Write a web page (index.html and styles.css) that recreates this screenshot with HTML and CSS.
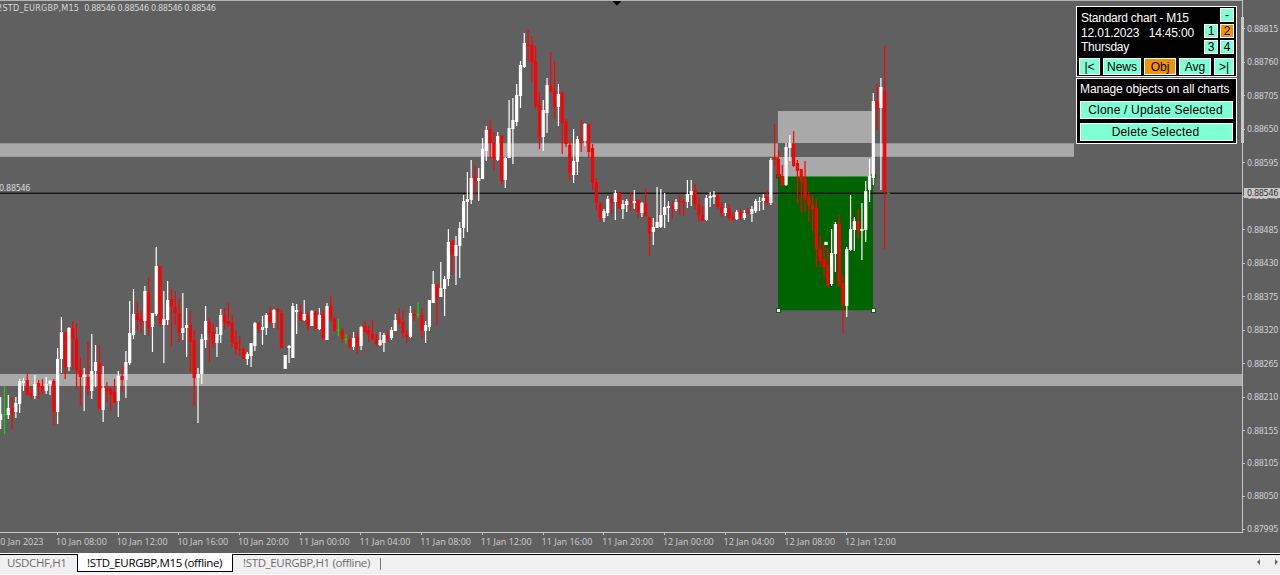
FILE: index.html
```html
<!DOCTYPE html>
<html lang="en">
  <head>
    <meta charset="UTF-8" />
    <meta name="viewport" content="width=device-width, initial-scale=1.0" />
    <title>!STD_EURGBP,M15</title>
    <link rel="stylesheet" href="styles.css" />
  </head>

  <body>
    <div id="terminal">
      <div id="workspace">
        <div id="chart">
          <svg id="plot" width="1242" height="532" viewBox="0 0 1242 532">
            <rect class="zone" x="0" y="143.3" width="778" height="13.5" />
            <rect class="zone" x="873" y="143.3" width="201" height="13.5" />
            <rect class="zone" x="0" y="374" width="1242" height="12" />
            <rect class="zone" x="778" y="111" width="95" height="32" />
            <rect class="zone" x="778" y="157" width="95" height="20" />
            <rect class="zone-green" x="778" y="176.5" width="95" height="133.8" />
            <rect class="zone-green" x="776" y="174" width="5" height="4.5" />
            <rect class="zone-green" x="871" y="174" width="5" height="4.5" />
            <rect class="price-line" x="0" y="192.6" width="1242" height="1.3" />
            <g id="candles"></g>
            <g class="handle">
              <rect x="776.5" y="308.5" width="4" height="4" />
              <rect x="871.5" y="308.5" width="4" height="4" />
            </g>
            <rect x="824.3" y="241.8" width="3.4" height="3.2" fill="#fff" />
            <rect x="887" y="192.5" width="3" height="1.4" fill="#1fae1f" />
            <path d="M612.5 1 H621.5 L617 5.8 Z" fill="#000" />
          </svg>
          <p class="title">
            <span>!STD_EURGBP,M15</span>
            <span class="prices">0.88546 0.88546 0.88546 0.88546</span>
          </p>
          <p class="line-label">0.88546</p>

          <div id="panels">
            <div class="panel panel-main">
              <div class="info">
                <p>Standard chart - M15</p>
                <p class="date">12.01.2023 &nbsp; 14:45:00</p>
                <p>Thursday</p>
              </div>
              <div class="numbers">
                <button class="btn minus">-</button>
                <button class="btn">1</button>
                <button class="btn active">2</button>
                <button class="btn">3</button>
                <button class="btn">4</button>
              </div>
              <div class="tools">
                <button class="btn">|&lt;</button>
                <button class="btn">News</button>
                <button class="btn active">Obj</button>
                <button class="btn">Avg</button>
                <button class="btn">&gt;|</button>
              </div>
            </div>
            <div class="panel panel-objects">
              <p>Manage objects on all charts</p>
              <button class="btn">Clone / Update Selected</button>
              <button class="btn">Delete Selected</button>
            </div>
          </div>
        </div>

        <div id="price-axis">
          <span>0.88815</span>
          <span>0.88760</span>
          <span>0.88705</span>
          <span>0.88650</span>
          <span>0.88595</span>
          <span>0.88540</span>
          <span>0.88485</span>
          <span>0.88430</span>
          <span>0.88375</span>
          <span>0.88320</span>
          <span>0.88265</span>
          <span>0.88210</span>
          <span>0.88155</span>
          <span>0.88105</span>
          <span>0.88050</span>
          <span>0.87995</span>
          <b class="price-now">0.88546</b>
          <i class="scale-bar"></i>
        </div>
      </div>

      <div id="time-axis">
        <span>10 Jan 2023</span>
        <span>10 Jan 08:00</span>
        <span>10 Jan 12:00</span>
        <span>10 Jan 16:00</span>
        <span>10 Jan 20:00</span>
        <span>11 Jan 00:00</span>
        <span>11 Jan 04:00</span>
        <span>11 Jan 08:00</span>
        <span>11 Jan 12:00</span>
        <span>11 Jan 16:00</span>
        <span>11 Jan 20:00</span>
        <span>12 Jan 00:00</span>
        <span>12 Jan 04:00</span>
        <span>12 Jan 08:00</span>
        <span>12 Jan 12:00</span>
      </div>

      <div id="tabs">
        <div class="tab tab-first">USDCHF,H1</div>
        <div class="tab tab-active">!STD_EURGBP,M15 (offline)</div>
        <div class="tab tab-last">!STD_EURGBP,H1 (offline)</div>
        <svg class="arrows" width="24" height="10" viewBox="0 0 24 10">
          <path d="M4 2 V8 L1 5 Z M19 2 V8 L22 5 Z" />
        </svg>
      </div>
    </div>
    <script src="script.js"></script>
  </body>
</html>
```

FILE: styles.css
```css
body {
  margin: 0;
  overflow: hidden;
  background-color: #f0f0f0;
  font-family: "Open Sans", "Noto Sans", sans-serif;
}

p {
  margin: 0;
}

#terminal {
  display: flex;
  flex-direction: column;
  width: 1280px;
  height: 575px;
  background-color: #606060;
}

#workspace {
  display: flex;
  height: 532px;
}

/* chart */

#chart {
  position: relative;
  width: 1242px;
  box-sizing: border-box;
  border-top: 1px solid #b4b4b4;
}

#plot {
  display: block;
  margin-top: -1px;
}

.zone {
  fill: #a9a9a9;
}

.zone-green {
  fill: #006400;
}

.price-line {
  fill: #111;
}

.handle rect {
  fill: #fff;
  stroke: #006400;
  stroke-width: 1;
}

.up {
  fill: #fff;
}

.down {
  fill: #f00;
}

.flat {
  fill: #0d0;
}

.title,
.line-label {
  position: absolute;
  left: -1px;
  font-family: "DejaVu Sans Condensed", "DejaVu Sans", sans-serif;
  font-size: 9px;
  line-height: 12px;
  color: #d8d8d8;
  white-space: nowrap;
}

.title {
  display: flex;
  gap: 5px;
  top: 1px;
  letter-spacing: 0.22px;
}

.prices,
.line-label {
  letter-spacing: -0.33px;
}

.line-label {
  top: 181px;
}

/* control panels */

#panels {
  position: absolute;
  top: 5px;
  left: 1076px;
  width: 161px;
  font-family: "Liberation Sans", Arial, sans-serif;
  color: #fff;
}

.panel {
  box-sizing: border-box;
  border: 1px solid #fff;
  background-color: #000;
}

.panel-main {
  display: grid;
  grid-template-columns: 1fr 34px;
  grid-template-rows: 48px 1fr;
  height: 71px;
}

.info {
  padding: 4px 0 0 4px;
  font-size: 12px;
  line-height: 14.5px;
  letter-spacing: -0.25px;
  white-space: nowrap;
}

.info .date {
  letter-spacing: -0.18px;
}

.numbers {
  display: grid;
  grid-template-columns: 14px 14px;
  grid-template-rows: 14px 14px 14px;
  gap: 2px;
  padding: 1px 0 0 2px;
}

.btn {
  padding: 0;
  border: 1px solid #fff;
  background-color: #7fffd4;
  font-family: "Liberation Sans", Arial, sans-serif;
  font-size: 12px;
  line-height: 12px;
  color: #000;
}

.btn.active {
  background-color: #f29400;
}

.minus {
  grid-column: 2;
}

.tools {
  grid-column: 1 / 3;
  display: grid;
  grid-template-columns: 21px 38px 32px 32px 20px;
  grid-template-rows: 17px;
  justify-content: space-between;
  padding: 3px 2px 0 2px;
}

.panel-objects {
  display: flex;
  flex-direction: column;
  gap: 4px;
  height: 66px;
  margin-top: 1px;
  padding: 3px 3px 0 3px;
  font-size: 12px;
  line-height: 15px;
}

.panel-objects p {
  letter-spacing: -0.12px;
  white-space: nowrap;
}

.panel-objects .btn {
  height: 18px;
  padding-right: 2px;
  letter-spacing: 0.2px;
}

/* axes */

#price-axis {
  position: relative;
  display: flex;
  flex-direction: column;
  width: 38px;
  height: 532px;
  box-sizing: border-box;
  padding-top: 12px;
  border-left: 1px solid #c8c8c8;
  font-family: "DejaVu Sans Condensed", "DejaVu Sans", sans-serif;
  font-size: 9px;
  letter-spacing: -0.35px;
  color: #d0d0d0;
}

#price-axis span {
  display: flex;
  align-items: center;
  flex: none;
  height: 33.5px;
}

#price-axis span:nth-child(14) {
  margin-top: -1px;
}

#price-axis span:nth-child(n + 14) {
  height: 33px;
}

#price-axis span::before {
  content: "";
  width: 2px;
  height: 1px;
  margin-right: 2px;
  background-color: #c8c8c8;
}

.price-now {
  position: absolute;
  top: 188px;
  left: 1px;
  width: 36px;
  height: 10px;
  padding-left: 3px;
  box-sizing: border-box;
  background-color: #c8c8c8;
  font-weight: normal;
  line-height: 11px;
  color: #333;
}

.scale-bar {
  position: absolute;
  top: 17px;
  left: -2px;
  width: 3px;
  height: 126px;
  background-color: #c8c8c8;
}

#time-axis {
  display: flex;
  height: 21px;
  width: 1243px;
  box-sizing: border-box;
  border-top: 1px solid #c8c8c8;
  font-size: 9px;
  line-height: 13px;
  color: #d0d0d0;
  white-space: nowrap;
}

#time-axis span {
  flex: none;
  width: 60.7px;
}

#time-axis span::before {
  content: "";
  display: block;
  width: 1px;
  height: 2px;
  margin-left: 1px;
  background-color: #c8c8c8;
}

#time-axis span:first-child {
  width: 61px;
  margin-left: -5px;
}

/* tabs */

#tabs {
  display: flex;
  height: 22px;
  box-sizing: border-box;
  border-top: 1px solid #fff;
  border-bottom: 1px solid #fff;
  background-color: #f0f0f0;
  box-shadow: inset 0 1px #000;
  font-size: 11.5px;
  line-height: 18px;
  letter-spacing: -0.35px;
  color: #6d6d6d;
}

.tab {
  box-sizing: border-box;
  height: 18px;
  white-space: nowrap;
}

.tab-first {
  width: 77px;
  padding-left: 7px;
}

.tab-active {
  width: 156px;
  padding-left: 9px;
  border: 1px solid #000;
  border-top: 0;
  background-color: #fff;
  color: #000;
}

.tab-last {
  width: 148px;
  padding-left: 10px;
  background: linear-gradient(#777, #777) right 4px / 1px 12px no-repeat;
}

.arrows {
  margin: 3px 0 0 auto;
  fill: #666;
}
```

FILE: script.js
```js
// high, body top, body bottom, low, color (w = up, r = down, g = flat)
const candles = `
397 414 420 429 w,386 414 415 434 g,395 408 415 419 w,397 408 413 430 r,397 403 412 418 w,379 381 404 413 w
378 381 383 391 w,373 380 395 395 r,386 393 396 399 r,375 384 396 399 w,380 383 387 399 r,379 386 391 394 r
377 384 391 394 w,380 381 384 395 w,379 381 412 425 r,348 359 412 424 w,317 332 359 373 w,332 332 367 379 r
327 328 367 371 w,321 328 339 369 r,323 339 370 389 r,358 370 377 406 r,368 375 377 411 w,342 377 389 395 r
334 371 391 399 w,345 362 371 387 w,345 362 410 410 r,366 388 410 422 w,382 388 391 402 r,387 389 395 411 r
379 392 403 403 r,371 376 401 417 w,366 376 380 392 r,351 362 380 398 w,301 333 363 365 w,289 314 335 339 w
301 313 320 330 r,311 319 322 333 r,286 291 321 335 w,277 292 328 336 r,313 313 327 352 w,247 266 314 316 w
266 266 323 327 r,291 319 325 363 w,281 300 320 325 w,289 299 307 346 r,291 307 313 325 r,299 313 333 342 r
293 328 333 340 w,308 325 328 357 w,311 325 342 372 r,330 340 378 406 r,368 374 378 423 w,334 339 374 384 w
306 321 340 348 w,318 322 333 363 r,323 332 343 348 r,327 334 343 357 w,309 315 335 343 w,308 315 322 329 r
303 321 324 327 r,315 323 343 347 r,331 342 349 355 r,336 349 350 356 r,347 349 359 359 r,352 354 359 365 w
343 343 356 367 w,322 323 346 351 w,322 323 329 333 r,316 327 330 345 w,313 315 328 335 w,307 313 322 326 r
309 310 323 328 w,308 309 312 329 r,310 313 348 348 r,355 355 369 369 w,345 346 348 363 w,303 306 358 358 w
304 310 312 334 w,304 312 321 321 r,300 314 320 321 w,311 315 326 331 r,310 311 326 326 w,311 311 329 329 r
308 315 329 330 w,310 314 338 340 r,303 306 340 340 w,296 306 319 321 r,317 319 331 332 r,319 330 331 336 g
328 330 339 343 r,334 339 340 344 g,334 339 347 349 r,332 338 347 350 w,332 337 346 354 r,326 327 346 350 w
321 326 332 333 r,325 330 335 342 r,320 334 339 340 r,334 339 344 346 r,332 340 345 346 w,333 335 343 352 w
330 335 338 342 r,327 330 338 340 w,314 320 331 331 w,308 319 323 325 r,311 322 333 338 r,330 334 337 343 r
306 313 337 338 w,309 314 316 321 r,302 314 315 318 g,308 315 331 338 r,321 325 331 343 w,300 300 327 331 w
271 284 303 303 w,284 284 298 325 r,262 288 297 297 w,276 279 289 316 w,229 242 279 286 w,240 241 255 275 r
236 245 256 285 w,222 228 246 278 w,195 201 228 238 w,172 199 202 232 w,160 178 200 204 w,165 177 181 195 r
168 178 181 201 w,138 149 179 179 w,126 130 151 161 w,120 129 143 158 r,132 143 159 171 r,132 136 160 161 w
135 136 181 184 r,157 158 180 188 w,100 128 158 158 w,98 120 129 164 w,84 95 122 126 w,61 65 96 108 w
33 43 67 68 w,30 44 46 62 r,36 45 62 82 r,46 61 106 109 r,92 105 137 149 r,100 110 137 151 w
78 85 113 133 w,52 86 91 93 r,61 91 107 119 r,84 94 107 126 w,91 93 123 154 r,119 122 144 147 r
140 145 173 181 r,129 161 175 183 w,136 139 162 175 w,120 139 141 152 r,123 124 141 146 w,124 124 152 158 r
144 148 183 190 r,178 182 203 211 r,202 204 218 222 r,209 211 218 222 w,196 199 213 216 w,196 199 203 214 r
190 193 202 220 w,192 193 209 209 r,200 204 209 219 w,199 201 205 212 w,192 201 203 211 r,190 201 203 209 w
199 200 212 218 r,202 203 213 217 w,188 203 216 217 r,217 217 234 256 r,218 227 232 245 w,187 222 228 228 w
189 215 227 228 w,193 207 215 228 w,201 206 208 222 w,201 206 209 219 r,199 202 209 211 w,194 201 202 215 r
199 201 203 216 r,180 194 202 208 w,180 191 195 206 w,184 190 204 209 r,197 204 215 222 r,207 215 221 221 r
195 198 220 221 w,192 196 198 207 w,191 195 197 204 w,194 195 207 209 r,202 207 213 217 r,203 208 213 216 w
204 208 218 221 r,212 217 219 221 r,210 212 219 220 w,209 212 217 220 r,210 213 218 220 w,208 212 213 214 r
206 209 214 222 w,199 201 211 213 w,197 201 202 211 w,194 198 201 210 w,190 197 203 205 r,158 160 203 205 w
124 157 160 166 r,150 159 177 177 r,165 176 185 186 r,143 147 185 186 w,135 143 148 161 w,131 144 166 167 r
160 163 171 203 r,169 169 181 213 r,161 179 198 212 r,192 197 205 222 r,195 205 209 231 r,199 208 249 267 r
236 249 261 267 r,243 259 267 278 r,248 265 286 287 r,229 253 284 286 w,222 224 254 272 w,215 224 285 287 r
275 283 305 333 r,247 249 306 317 w,195 229 250 251 w,217 221 230 251 w,209 221 231 239 r,203 229 231 260 w
181 191 230 242 w,159 176 190 202 w,93 101 178 185 w,84 101 109 130 r,78 87 108 190 w,46 90 192 249 r
`
  .trim()
  .split(/[,\n]/);

const STEP = 3.794;
const names = { w: "up", r: "down", g: "flat" };

function bar(x, y, width, height, name) {
  return `<rect class="${name}" x="${x.toFixed(2)}" y="${y}" width="${width}" height="${height}" />`;
}

document.getElementById("candles").innerHTML = candles
  .map((item, i) => {
    const [high, top, bottom, low, color] = item.split(" ");
    const x = 0.7 + STEP * i;
    const name = names[color];
    return (
      bar(x - 0.6, +high, 1.2, low - high, name) +
      bar(x - 1.6, +top, 3.2, Math.max(bottom - top, 1), name)
    );
  })
  .join("");
```
